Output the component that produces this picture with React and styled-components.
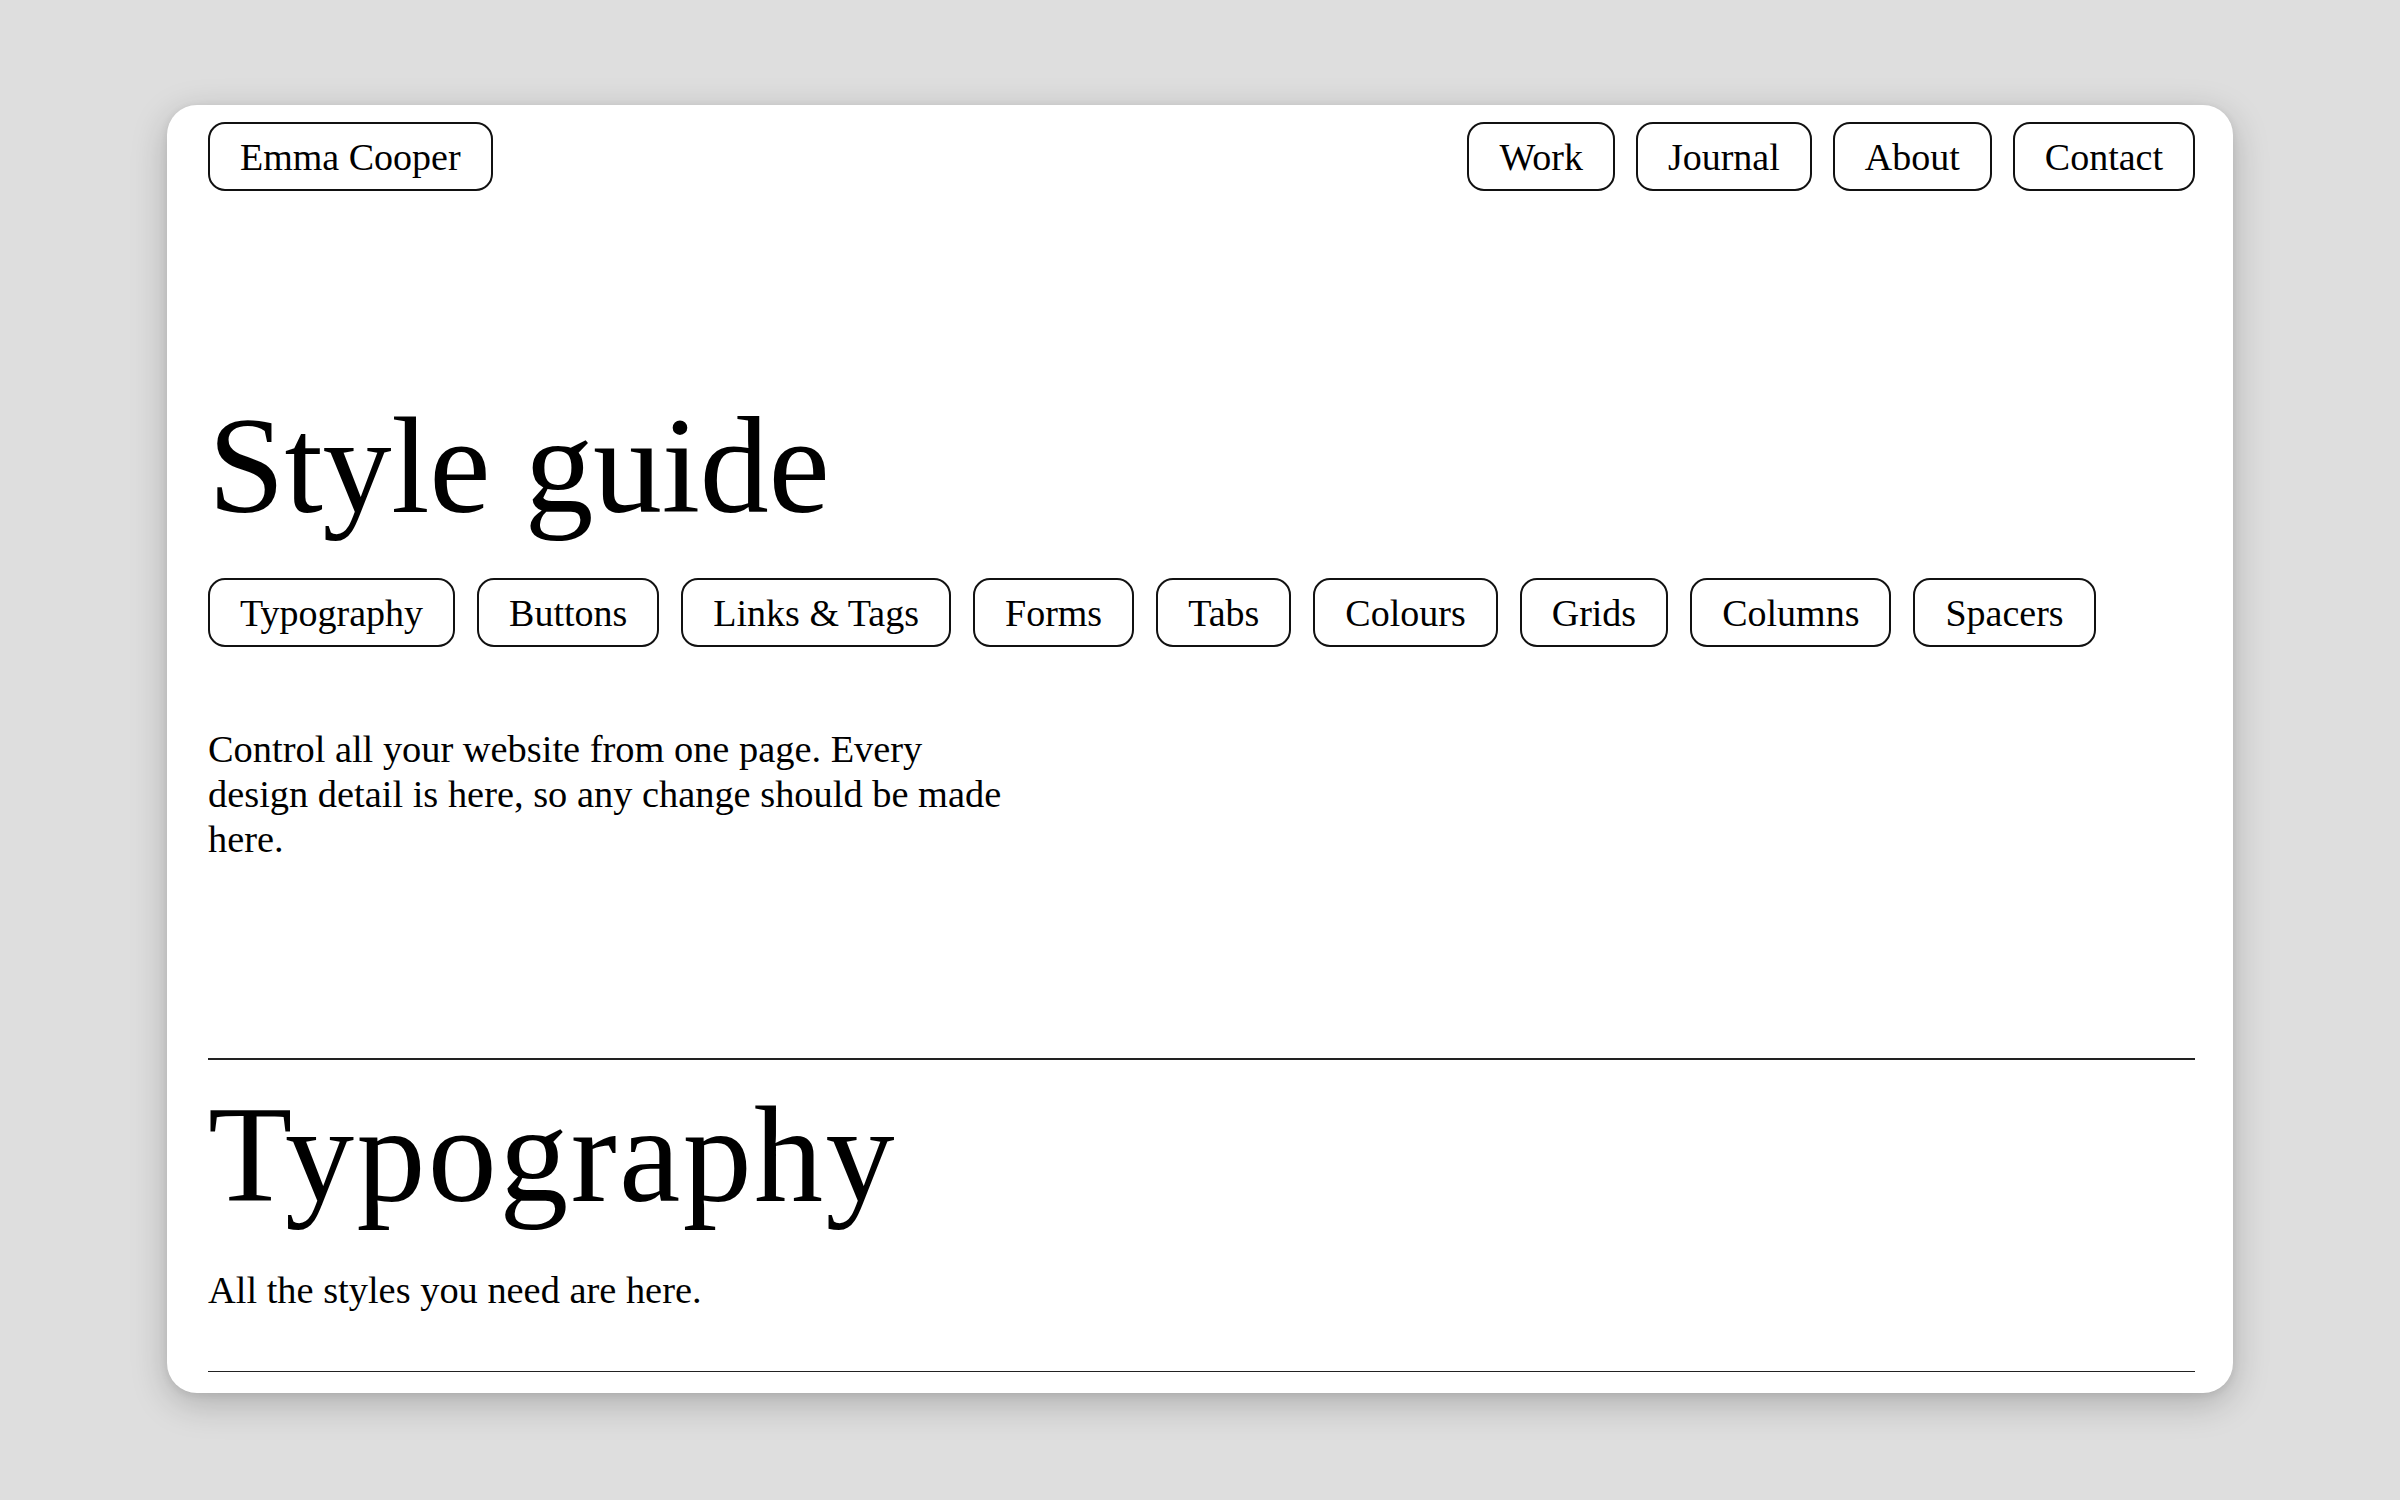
import React from "react";
import styled, { createGlobalStyle } from "styled-components";

const Global = createGlobalStyle`
  html, body { margin: 0; padding: 0; }
  body {
    background: #dedede;
    font-family: "Liberation Serif", "Times New Roman", serif;
    color: #000;
  }
  * { box-sizing: border-box; }
`;

const Stage = styled.div`
  min-height: 1500px;
  padding: 105px 167px 0;
`;

const Card = styled.main`
  background: #fff;
  border-radius: 30px;
  box-shadow: 0 10px 36px rgba(0, 0, 0, 0.22), 0 2px 8px rgba(0, 0, 0, 0.08);
  padding: 17px 38px 21px 41px;
  height: 1288px;
  display: flex;
  flex-direction: column;
`;

const Header = styled.header`
  display: flex;
  justify-content: space-between;
  align-items: center;
`;

const Nav = styled.nav`
  display: flex;
  gap: 21px;
`;

const Pill = styled.a`
  display: inline-flex;
  align-items: center;
  height: 69px;
  padding: 0 30px;
  border: 2px solid #111;
  border-radius: 17px;
  font-size: 38px;
  line-height: normal;
  color: #000;
  text-decoration: none;
  white-space: nowrap;
`;

const Title = styled.h1`
  margin: ${(p) => p.$top}px 0 0;
  font-size: 138px;
  font-weight: 400;
  line-height: 138px;
  letter-spacing: ${(p) => p.$track || 0}px;
`;

const Tags = styled.div`
  display: flex;
  flex-wrap: wrap;
  gap: 22px;
  margin-top: 43px;
`;

const Text = styled.p`
  margin: ${(p) => p.$top}px 0 0;
  font-size: 38.4px;
  line-height: 45px;
  max-width: ${(p) => p.$max || "none"};
`;

const Rule = styled.hr`
  margin: ${(p) => p.$top}px 0 0;
  border: 0;
  height: 2px;
  background: #222;
`;

const tags = [
  "Typography",
  "Buttons",
  "Links & Tags",
  "Forms",
  "Tabs",
  "Colours",
  "Grids",
  "Columns",
  "Spacers",
];

export default function App() {
  return (
    <>
      <Global />
      <Stage>
        <Card>
          <Header>
            <Pill href="#">Emma Cooper</Pill>
            <Nav>
              <Pill href="#">Work</Pill>
              <Pill href="#">Journal</Pill>
              <Pill href="#">About</Pill>
              <Pill href="#">Contact</Pill>
            </Nav>
          </Header>
          <Title $top={206} $track={-0.3}>
            Style guide
          </Title>
          <Tags>
            {tags.map((t) => (
              <Pill key={t} href="#">
                {t}
              </Pill>
            ))}
          </Tags>
          <Text $top={80} $max="815px">
            Control all your website from one page. Every design detail is
            here, so any change should be made here.
          </Text>
          <Rule $top={196} />
          <Title $top={26} $track={2.4}>
            Typography
          </Title>
          <Text $top={44}>All the styles you need are here.</Text>
          <Rule $top={58} />
        </Card>
      </Stage>
    </>
  );
}
